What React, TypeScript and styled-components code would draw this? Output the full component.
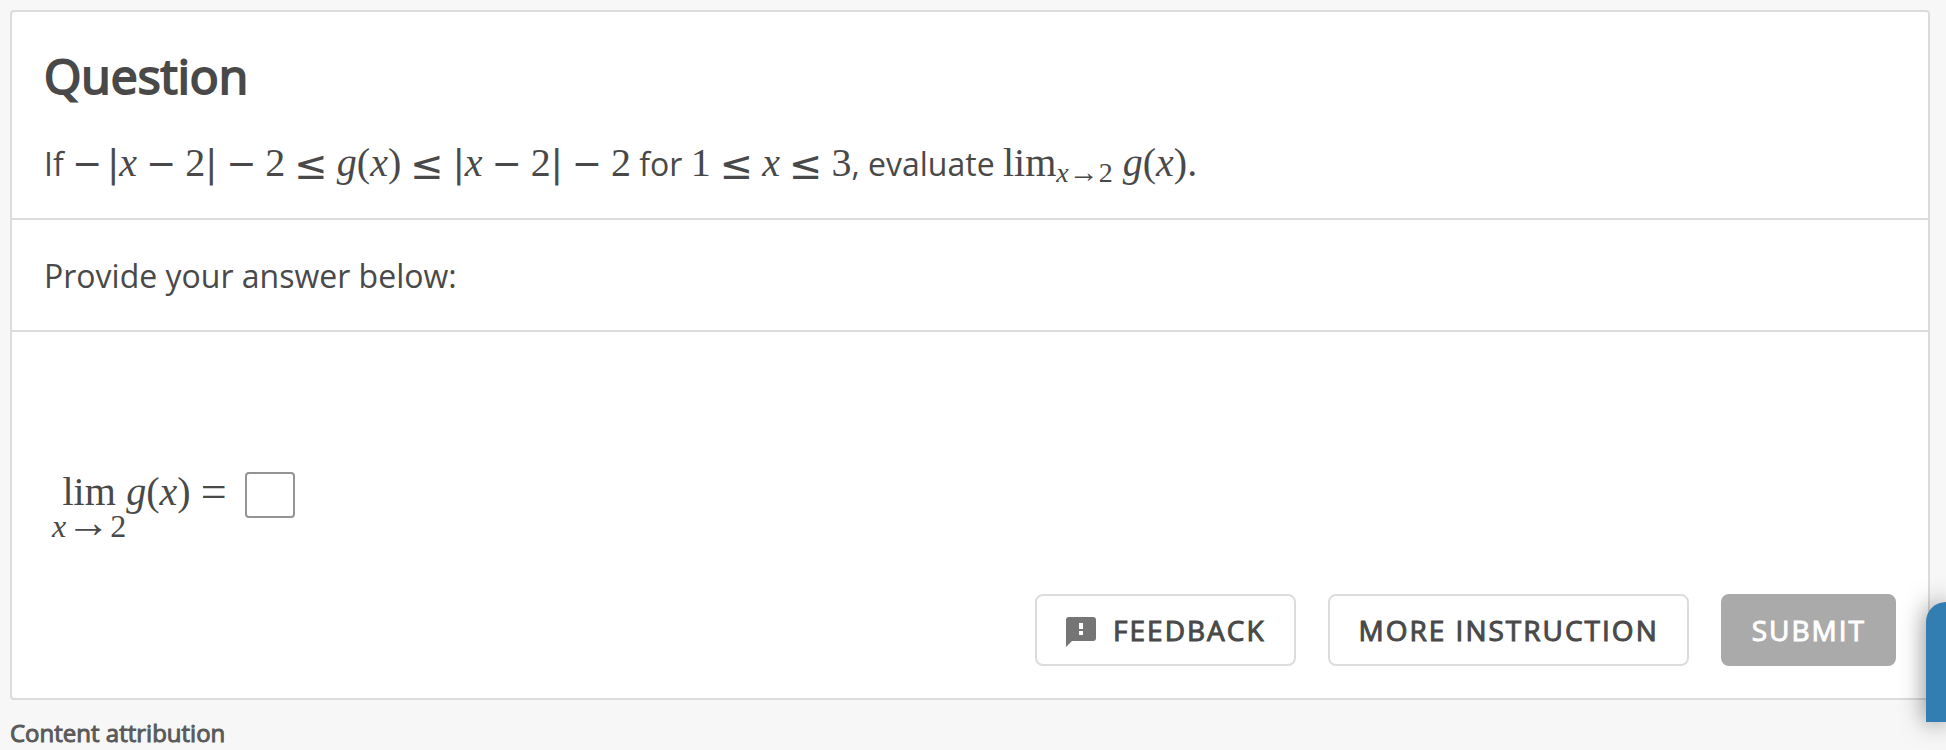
import React from "react";
import styled, { createGlobalStyle } from "styled-components";

const GlobalStyle = createGlobalStyle`
  *, *::before, *::after { box-sizing: border-box; }
  body {
    margin: 0;
    background: #f7f7f7;
    color: #494949;
    font-family: "Open Sans", sans-serif;
    font-size: 32px;
    line-height: 48px;
  }
`;

const Page = styled.div`
  padding: 10px 16px 0 10px;
`;

const Card = styled.main`
  display: flex;
  flex-direction: column;
  background: #fff;
  border: 2px solid #dcdcdc;
  border-radius: 4px;
`;

const Section = styled.section`
  padding: 32px 32px 30px;
  border-bottom: 2px solid #dcdcdc;
`;

const Title = styled.h1`
  margin: 0 0 32px;
  font-size: 48px;
  font-weight: 400;
  line-height: 64px;
  -webkit-text-stroke: 2px currentColor;
`;

const Text = styled.p`
  margin: 0;
`;

const MathText = styled.span`
  font-family: "Liberation Serif", serif;
  font-size: 40px;
  line-height: 40px;
  white-space: nowrap;
`;

const Operator = styled.span`
  margin: 0 9px;
  font-family: "DejaVu Sans", sans-serif;
  font-size: 36px;
  line-height: 0;
`;

const UnaryOperator = styled(Operator)`
  margin: 0 5px 0 0;
`;

const Relation = styled(Operator)`
  font-size: 40px;
  vertical-align: -3px;
`;

const Equals = styled.span`
  margin: 0 10px;
  font-size: 46px;
  line-height: 0;
  vertical-align: -2px;
`;

const Bar = styled.span`
  margin: 0 2px;
  -webkit-text-stroke: 1px currentColor;
`;

const Arrow = styled.span<{ $size: number }>`
  font-size: ${(p) => p.$size}px;
  line-height: 0;
`;

const Subscript = styled.sub`
  margin-right: 10px;
  font-size: 28px;
  line-height: 0;
  vertical-align: -6px;
`;

const AnswerSection = styled.section`
  display: flex;
  flex-direction: column;
  padding: 136px 32px 32px;
`;

const AnswerRow = styled.div`
  display: flex;
  align-items: flex-start;
  padding-left: 8px;
  margin-bottom: 52px;
`;

const AnswerLabel = styled.label`
  display: flex;
  align-items: flex-start;
  margin-right: 8px;
  font-family: "Liberation Serif", serif;
  font-size: 40px;
  line-height: 48px;
`;

const Limit = styled.span`
  display: flex;
  flex-direction: column;
  align-items: center;
`;

const LimitUnder = styled.span`
  padding-bottom: 6px;
  font-size: 32px;
  line-height: 20px;
  white-space: nowrap;
`;

const AnswerInput = styled.input`
  width: 50px;
  height: 46px;
  margin-top: 4px;
  padding: 0 4px;
  border: 2px solid #949494;
  border-radius: 4px;
  background: #fff;
  color: inherit;
  font: 32px "Liberation Serif", serif;
`;

const Actions = styled.div`
  display: flex;
  justify-content: flex-end;
  gap: 32px;
`;

const Button = styled.button<{ $filled?: boolean }>`
  display: flex;
  align-items: center;
  gap: 17px;
  height: 72px;
  padding: 0 28px 0 29px;
  border: 2px solid ${(p) => (p.$filled ? "#aaa" : "#dcdcdc")};
  border-radius: 8px;
  background: ${(p) => (p.$filled ? "#aaa" : "#fff")};
  color: ${(p) => (p.$filled ? "#fff" : "#494949")};
  font-family: inherit;
  font-size: 28px;
  letter-spacing: 2px;
  text-transform: uppercase;
  white-space: nowrap;
  -webkit-text-stroke: 1px currentColor;
`;

const Icon = styled.svg`
  width: 30px;
  height: 30px;
  margin-top: 4px;
  fill: #757575;
`;

const Footer = styled.footer`
  margin-top: 17px;
  color: #5a5a5a;
  font-size: 24px;
  line-height: 32px;
  -webkit-text-stroke: 1px currentColor;
`;

const SideTab = styled.button`
  position: fixed;
  right: 0;
  bottom: 28px;
  width: 20px;
  height: 120px;
  padding: 0;
  border: 0;
  border-radius: 20px 0 0 0;
  background: #327eb2;
  box-shadow: 0 0 24px rgba(0, 0, 0, 0.5);
`;

const Minus = () => <Operator>−</Operator>;
const LessEq = () => <Relation>≤</Relation>;
const G = () => (
  <>
    <i>g</i>(<i>x</i>)
  </>
);
const Abs = () => (
  <>
    <Bar>|</Bar>
    <i>x</i>
    <Minus />2<Bar>|</Bar>
  </>
);

const FeedbackIcon = () => (
  <Icon viewBox="0 0 30 30" aria-hidden="true" strokeWidth="0">
    <path
      fillRule="evenodd"
      d="M3 0h24a3 3 0 0 1 3 3v18a3 3 0 0 1-3 3H6l-6 6V3a3 3 0 0 1 3-3zM13 6v6h4V6zM13 14v4h4v-4z"
    />
  </Icon>
);

export default function App() {
  return (
    <>
      <GlobalStyle />
      <Page>
        <Card>
          <Section>
            <Title>Question</Title>
            <Text>
              If{" "}
              <MathText>
                <UnaryOperator>−</UnaryOperator>
                <Abs />
                <Minus />2<LessEq />
                <G />
                <LessEq />
                <Abs />
                <Minus />2
              </MathText>{" "}
              for{" "}
              <MathText>
                1<LessEq />
                <i>x</i>
                <LessEq />3
              </MathText>
              , evaluate{" "}
              <MathText>
                lim
                <Subscript>
                  <i>x</i>
                  <Arrow $size={30}>→</Arrow>2
                </Subscript>
                <G />.
              </MathText>
            </Text>
          </Section>
          <Section>
            <Text>Provide your answer below:</Text>
          </Section>
          <AnswerSection>
            <AnswerRow>
              <AnswerLabel htmlFor="answer">
                <Limit>
                  lim
                  <LimitUnder>
                    <i>x</i>
                    <Arrow $size={44}>→</Arrow>2
                  </LimitUnder>
                </Limit>
                <span>
                  <G />
                  <Equals>=</Equals>
                </span>
              </AnswerLabel>
              <AnswerInput id="answer" type="text" />
            </AnswerRow>
            <Actions>
              <Button type="button">
                <FeedbackIcon />
                Feedback
              </Button>
              <Button type="button">More instruction</Button>
              <Button type="button" $filled disabled>
                Submit
              </Button>
            </Actions>
          </AnswerSection>
        </Card>
        <Footer>Content attribution</Footer>
      </Page>
      <SideTab type="button" aria-label="Open help" />
    </>
  );
}
